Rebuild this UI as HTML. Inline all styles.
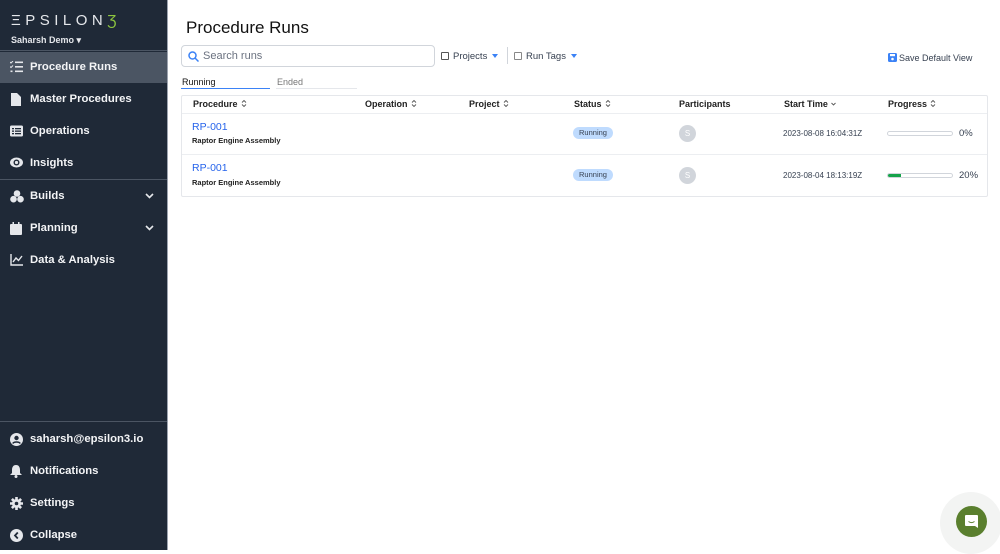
<!DOCTYPE html>
<html><head><meta charset="utf-8"><style>
*{box-sizing:border-box;margin:0;padding:0}
body{width:1000px;height:550px;overflow:hidden;font-family:"Liberation Sans",Arial,sans-serif;background:#fff;position:relative;color:#111}
.sb{position:absolute;left:0;top:0;width:168px;height:550px;background:#1f2937;border-right:1px solid #9ca3af}
.logo{position:absolute;left:11px;top:12px;color:#e5e7eb;font-size:15px;letter-spacing:4.5px;font-weight:400}
.logo b{color:#8dc63f;font-weight:400}
.org{position:absolute;left:11px;top:35px;color:#e5e7eb;font-size:9px;font-weight:bold}
.div{position:absolute;left:0;width:167px;height:1px;background:#4b5563}
.it{position:absolute;left:0;width:167px;height:31px;color:#f3f4f6;font-size:11.3px;font-weight:bold;line-height:31px;padding-left:30px}
.it.act{background:#4b5563}
.it svg{position:absolute;left:10px;top:9px}
.it .chev{position:absolute;left:145px;top:12px}
h1{position:absolute;left:186px;top:18px;font-size:17px;font-weight:400;color:#111}
.search{position:absolute;left:181px;top:45px;width:254px;height:22px;border:1px solid #d1d5db;border-radius:4px;font-size:11px;color:#6b7280;line-height:20px;padding-left:21px}
.search svg{position:absolute;left:6px;top:5px}
.f{position:absolute;top:50px;font-size:9.5px;color:#374151}
.cb{display:inline-block;width:8px;height:8px;border:1px solid #555;border-radius:1px;vertical-align:-1px;margin-right:4px}
.tri{display:inline-block;width:0;height:0;border-left:3.5px solid transparent;border-right:3.5px solid transparent;border-top:4px solid #3b82f6;margin-left:5px;vertical-align:1px}
.tab{position:absolute;top:77px;font-size:9px;color:#111;padding:0 1px;height:12px}
.tbl{position:absolute;left:181px;top:95px;width:807px;height:102px;border:1px solid #e5e7eb;border-radius:2px}
.th{position:absolute;top:99px;font-size:9px;font-weight:bold;color:#222}
.th i{display:inline-block;width:6px;height:9px;margin-left:3px;vertical-align:-1px;background:no-repeat}
.hl{position:absolute;left:182px;width:805px;height:1px;background:#eceef1}
.rp{position:absolute;left:192px;font-size:10.5px;color:#2563eb}
.sub{position:absolute;left:192px;font-size:7.5px;font-weight:bold;color:#222}
.pill{position:absolute;left:573px;width:40px;height:12px;border-radius:6px;background:#bfdbfe;font-size:7.5px;color:#374151;text-align:center;line-height:12px}
.av{position:absolute;left:679px;width:17px;height:17px;border-radius:50%;background:#d1d5db;color:#fff;font-size:8px;text-align:center;line-height:17px}
.tm{position:absolute;left:783px;font-size:8px;color:#374151}
.bar{position:absolute;left:887px;width:66px;height:5px;border:1px solid #d1d5db;border-radius:3px;overflow:hidden}
.pct{position:absolute;left:959px;font-size:9.5px;color:#374151}
</style></head><body>
<svg width="0" height="0" style="position:absolute"><defs><g id="srt"><path d="M1 3.5l2-2 2 2M1 5.5l2 2 2-2" stroke="#555" stroke-width="0.9" fill="none"/></g></defs></svg>
<div class="sb">
<div class="logo">ΞPSILON<b>Ʒ</b></div>
<div class="org">Saharsh Demo ▾</div>
<div class="div" style="top:50px"></div>
<div class="it act" style="top:52px"><svg width="13" height="12" viewBox="0 0 13 12" fill="#e5e7eb"><path d="M0 1l1 1 2-2M0 5.5l1 1 2-2" stroke="#e5e7eb" fill="none" stroke-width="1"/><rect x="5" y="0.5" width="8" height="1.6"/><rect x="5" y="5" width="8" height="1.6"/><rect x="5" y="9.5" width="8" height="1.6"/><rect x="0.5" y="9.5" width="2" height="1.6"/></svg>Procedure Runs</div>
<div class="it" style="top:84px"><svg width="12" height="13" viewBox="0 0 12 13"><path d="M1 0h6l4 4v9H1z" fill="#e5e7eb"/></svg>Master Procedures</div>
<div class="it" style="top:116px"><svg width="13" height="12" viewBox="0 0 13 12"><rect x="0" y="0.5" width="13" height="11" rx="1.5" fill="#e5e7eb"/><g fill="#1f2937"><rect x="2" y="3" width="2" height="1.3"/><rect x="5" y="3" width="6" height="1.3"/><rect x="2" y="5.5" width="2" height="1.3"/><rect x="5" y="5.5" width="6" height="1.3"/><rect x="2" y="8" width="2" height="1.3"/><rect x="5" y="8" width="6" height="1.3"/></g></svg>Operations</div>
<div class="it" style="top:148px"><svg width="13" height="11" viewBox="0 0 13 11"><ellipse cx="6.5" cy="5.5" rx="6.5" ry="5" fill="#e5e7eb"/><circle cx="6.5" cy="5.5" r="3" fill="#1f2937"/><circle cx="6.5" cy="5.5" r="1.6" fill="#e5e7eb"/></svg>Insights</div>
<div class="div" style="top:179px"></div>
<div class="it" style="top:181px"><svg width="14" height="13" viewBox="0 0 14 13" fill="#e5e7eb"><circle cx="7" cy="3.5" r="3.3"/><circle cx="3.5" cy="9.2" r="3.3"/><circle cx="10.5" cy="9.2" r="3.3"/></svg>Builds<svg class="chev" width="9" height="6" viewBox="0 0 9 6"><path d="M1 1l3.5 3.5L8 1" stroke="#e5e7eb" stroke-width="1.6" fill="none"/></svg></div>
<div class="it" style="top:213px"><svg width="12" height="13" viewBox="0 0 12 13" fill="#e5e7eb"><rect x="0" y="2" width="12" height="11" rx="1"/><rect x="2.5" y="0" width="1.5" height="3"/><rect x="8" y="0" width="1.5" height="3"/></svg>Planning<svg class="chev" width="9" height="6" viewBox="0 0 9 6"><path d="M1 1l3.5 3.5L8 1" stroke="#e5e7eb" stroke-width="1.6" fill="none"/></svg></div>
<div class="it" style="top:245px"><svg width="13" height="12" viewBox="0 0 13 12"><path d="M1 0v11h12M3 8l3-4 2.5 2.5L12 2" stroke="#e5e7eb" stroke-width="1.4" fill="none"/></svg>Data &amp; Analysis</div>
<div class="div" style="top:421px"></div>
<div class="it" style="top:424px"><svg width="13" height="13" viewBox="0 0 13 13"><circle cx="6.5" cy="6.5" r="6.5" fill="#e5e7eb"/><circle cx="6.5" cy="5" r="2.2" fill="#1f2937"/><path d="M2.8 10.5c1-2 6.4-2 7.4 0" stroke="#1f2937" stroke-width="1.6" fill="none"/></svg>saharsh@epsilon3.io</div>
<div class="it" style="top:456px"><svg width="12" height="13" viewBox="0 0 12 13" fill="#e5e7eb"><path d="M6 0c3 0 4 2.5 4 5v3l2 2H0l2-2V5c0-2.5 1-5 4-5z"/><circle cx="6" cy="11.5" r="1.5"/></svg>Notifications</div>
<div class="it" style="top:488px"><svg width="13" height="13" viewBox="0 0 13 13"><circle cx="6.5" cy="6.5" r="4.5" fill="#e5e7eb"/><g stroke="#e5e7eb" stroke-width="2.6"><path d="M6.5 0v13M0 6.5h13M1.9 1.9l9.2 9.2M11.1 1.9l-9.2 9.2"/></g><circle cx="6.5" cy="6.5" r="1.8" fill="#1f2937"/></svg>Settings</div>
<div class="it" style="top:520px"><svg width="13" height="13" viewBox="0 0 13 13"><circle cx="6.5" cy="6.5" r="6.5" fill="#e5e7eb"/><path d="M7.8 3.5L5 6.5l2.8 3" stroke="#1f2937" stroke-width="1.8" fill="none"/></svg>Collapse</div>
</div>

<h1>Procedure Runs</h1>
<div class="search"><svg width="11" height="11" viewBox="0 0 11 11"><circle cx="4.5" cy="4.5" r="3.5" stroke="#3b82f6" stroke-width="1.5" fill="none"/><path d="M7 7l3.5 3.5" stroke="#3b82f6" stroke-width="1.5"/></svg>Search runs</div>
<div class="f" style="left:441px;top:51px"><span class="cb"></span>Projects<span class="tri"></span></div>
<div style="position:absolute;left:507px;top:47px;width:1px;height:17px;background:#d1d5db"></div>
<div class="f" style="left:514px;top:51px"><span class="cb" style="border-color:#888"></span>Run Tags<span class="tri"></span></div>
<div class="f" style="left:888px;top:53px;font-size:9px"><svg width="9" height="9" viewBox="0 0 9 9" style="vertical-align:-1px;margin-right:2px"><rect width="9" height="9" rx="1.5" fill="#3b82f6"/><rect x="2" y="1" width="5" height="2.2" fill="#fff"/><circle cx="4.5" cy="6" r="1.3" fill="#fff"/></svg>Save Default View</div>
<div class="tab" style="left:181px;width:89px;border-bottom:1.5px solid #3b82f6">Running</div>
<div class="tab" style="left:276px;width:81px;color:#777;border-bottom:1px solid #e5e7eb">Ended</div>

<div class="tbl"></div>
<div class="th" style="left:193px">Procedure<svg width="8" height="9" viewBox="0 0 6 9" style="margin-left:2px;vertical-align:-1px"><use href="#srt"/></svg></div>
<div class="th" style="left:365px">Operation<svg width="8" height="9" viewBox="0 0 6 9" style="margin-left:2px;vertical-align:-1px"><use href="#srt"/></svg></div>
<div class="th" style="left:469px">Project<svg width="8" height="9" viewBox="0 0 6 9" style="margin-left:2px;vertical-align:-1px"><use href="#srt"/></svg></div>
<div class="th" style="left:574px">Status<svg width="8" height="9" viewBox="0 0 6 9" style="margin-left:2px;vertical-align:-1px"><use href="#srt"/></svg></div>
<div class="th" style="left:679px">Participants</div>
<div class="th" style="left:784px">Start Time<svg width="7" height="9" viewBox="0 0 6 9" style="margin-left:2px;vertical-align:-1px"><path d="M1 4l2 2 2-2" stroke="#555" stroke-width="0.9" fill="none"/></svg></div>
<div class="th" style="left:888px">Progress<svg width="8" height="9" viewBox="0 0 6 9" style="margin-left:2px;vertical-align:-1px"><use href="#srt"/></svg></div>
<div class="hl" style="top:113px"></div>
<div class="hl" style="top:154px"></div>

<div class="rp" style="top:121px">RP-001</div>
<div class="sub" style="top:136px">Raptor Engine Assembly</div>
<div class="pill" style="top:127px">Running</div>
<div class="av" style="top:125px">S</div>
<div class="tm" style="top:129px">2023-08-08 16:04:31Z</div>
<div class="bar" style="top:131px"></div>
<div class="pct" style="top:128px">0%</div>

<div class="rp" style="top:162px">RP-001</div>
<div class="sub" style="top:178px">Raptor Engine Assembly</div>
<div class="pill" style="top:169px">Running</div>
<div class="av" style="top:167px">S</div>
<div class="tm" style="top:171px">2023-08-04 18:13:19Z</div>
<div class="bar" style="top:173px"><div style="width:13px;height:100%;background:#16a34a"></div></div>
<div class="pct" style="top:170px">20%</div>

<div style="position:absolute;left:940px;top:492px;width:62px;height:62px;border-radius:50%;background:#f3f4f3"></div>
<div style="position:absolute;left:956px;top:506px;width:31px;height:31px;border-radius:50%;background:#5a7f2e"></div>
<svg style="position:absolute;left:964px;top:514px" width="15" height="15" viewBox="0 0 15 15"><path d="M2 1h11a1 1 0 011 1v12l-3-2H2a1 1 0 01-1-1V2a1 1 0 011-1z" fill="#fff"/><path d="M4.5 7.5c2 1.5 4 1.5 6 0" stroke="#5a7f2e" stroke-width="1" fill="none"/></svg>
</body></html>
